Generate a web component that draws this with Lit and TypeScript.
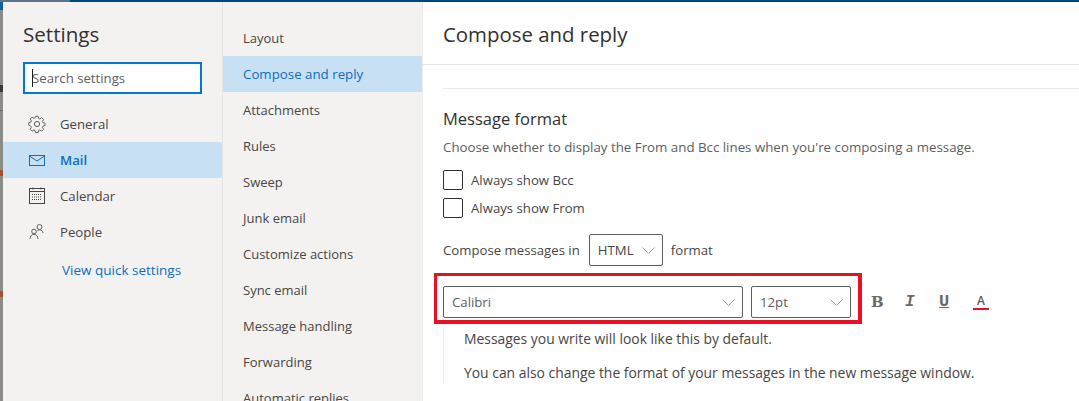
import { LitElement, html, css, svg } from "lit";
import { customElement } from "lit/decorators.js";

const chevron = html`<svg class="chev" width="13" height="7" viewBox="0 0 13 7"><path d="M.5.5l6 6 6-6" fill="none" stroke="#a19f9d" stroke-width="1"/></svg>`;

const icons: Record<string, unknown> = {
  General: svg`<g fill="none" stroke="#605e5c" stroke-width="1"><circle cx="9" cy="9" r="2.6"/><path d="M7.600 1h2.800l.4 2.200 1.400.6 1.900-1.300 2 2-1.300 1.900.6 1.400 2.100.4v2.800l-2.100.4-.6 1.400 1.300 1.900-2 2-1.900-1.300-1.400.6-.4 2.100H7.600l-.4-2.100-1.400-.6-1.900 1.300-2-2 1.300-1.900-.6-1.400L.5 10.400V7.600l2.100-.4.6-1.400-1.300-1.900 2-2 1.900 1.300 1.400-.6z" transform="translate(.3 .3) scale(.95)"/></g>`,
  Mail: svg`<g fill="none" stroke="#106ebe" stroke-width="1"><rect x="1.500" y="4.500" width="15" height="10"/><path d="M1.500 5l7.500 5 7.500-5"/></g>`,
  Calendar: svg`<g fill="none" stroke="#484644" stroke-width="1"><rect x="1.500" y="1.500" width="15" height="15"/><path d="M1.500 4.500h15M5 .5v2M13 .5v2"/><path d="M4 7.500h10M4 10h10M4 12.500h10" stroke-dasharray="1 1"/></g>`,
  People: svg`<g fill="none" stroke="#605e5c" stroke-width="1"><circle cx="11.500" cy="4" r="2.500"/><circle cx="6" cy="8.500" r="2.300"/><path d="M2 16c0-2.800 1.800-4.700 4-4.700s4 1.900 4 4.700M9.500 7.800c.6-.6 1.200-1 2-1 2 0 3.300 1.400 3.500 3.200"/></g>`,
};

const mainNav = ["General", "Mail", "Calendar", "People"];
const subNav = ["Layout", "Compose and reply", "Attachments", "Rules", "Sweep", "Junk email", "Customize actions", "Sync email", "Message handling", "Forwarding", "Automatic replies"];

@customElement("app-root")
export class AppRoot extends LitElement {
  static styles = css`
    :host { display: block; width: 1079px; height: 401px; overflow: hidden; font-family: "Open Sans", "Noto Sans", sans-serif; color: #323130; font-size: 13.2px; background: #fff; }
    .topbar { height: 2px; display: flex; }
    .topbar .a { width: 70px; background: #5e7283; }
    .topbar .b { flex: 1; background: #004578; }
    .frame { display: flex; height: 399px; }
    .dim {
      width: 3px;
      background: linear-gradient(#0f5fa8 0 8px, #8b8b8a 8px 83px, #3a3a3a 83px 90px, #8b8b8a 90px 108px, #707070 108px 109px, #8b8b8a 109px 168px, #a8502e 168px 174px, #8b8b8a 174px 289px, #a8502e 289px 295px, #8b8b8a 295px);
    }
    .panel { width: 219px; background: #f3f2f1; border-right: 1px solid #e6e5e4; flex: none; }
    .title { font-size: 20.6px; line-height: 28px; padding: 18px 0 0 20px; color: #323130; }
    .search { margin: 14px 0 0 20px; width: 179px; height: 32px; box-sizing: border-box; border: 2px solid #0078d4; background: #fff; display: flex; align-items: center; padding-left: 7px; color: #605e5c; position: relative; }
    .search i { position: absolute; left: 7px; top: 5px; width: 1px; height: 18px; background: #201f1e; }
    .nav { margin-top: 12px; }
    .item { height: 36px; display: flex; align-items: center; padding-left: 25px; gap: 14px; border-radius: 2px; color: #484644; }
    .item svg { width: 18px; height: 18px; flex: none; }
    .item.on { background: #c7e0f4; color: #106ebe; font-weight: 600; }
    .link { color: #106ebe; padding: 10px 0 0 59px; line-height: 20px; font-size: 13.5px; }
    .sub { width: 199px; background: #f3f2f1; padding-top: 18px; border-right: 1px solid #edebe9; overflow: hidden; flex: none; font-size: 13px; color: #484644; }
    .sub div { height: 36px; display: flex; align-items: center; padding-left: 20px; white-space: nowrap; }
    .sub .on { background: #c7e0f4; color: #106ebe; font-weight: 500; font-size: 13.3px; }
    .main { flex: 1; min-width: 0; }
    .head { height: 60px; padding: 2px 0 0 20px; border-bottom: 1px solid #e8e6e5; display: flex; align-items: center; font-size: 20.4px; font-weight: 500; }
    .body { padding: 23px 0 0 20px; }
    .rule { height: 1px; background: #edebe9; }
    h3 { margin: 0; font-size: 16.5px; font-weight: 500; line-height: 22px; padding-top: 19px; }
    .desc { color: #605e5c; line-height: 20px; margin-top: 7px; white-space: nowrap; font-size: 13.3px; }
    .check { display: flex; align-items: center; gap: 8px; height: 20px; margin-top: 8px; color: #484644; }
    .check i { width: 20px; height: 20px; box-sizing: border-box; border: 1px solid #323130; border-radius: 2px; background: #fff; }
    .desc + .check { margin-top: 13px; }
    .compose { display: flex; align-items: center; gap: 8px; height: 32px; margin-top: 16px; color: #484644; }
    .compose .select { margin-left: 1px; }
    .select { height: 32px; box-sizing: border-box; border: 1px solid #605e5c; border-radius: 2px; display: flex; align-items: center; justify-content: space-between; padding: 0 7px 0 8px; background: #fff; color: #484644; }
    .fmt { width: 74px; }
    .fontline { display: flex; align-items: center; margin: 7px 0 0 -9px; }
    .fontrow { display: flex; align-items: flex-end; box-sizing: border-box; width: 428px; height: 51px; border: 3px solid #e81123; border-width: 3px 4px 4px 3px; gap: 8px; padding: 0 7px 2px 6px; flex: none; }
    .font { width: 300px; color: #605e5c; }
    .size { width: 100px; color: #605e5c; }
    .tools { display: flex; margin: 7px 0 0 9px; align-items: center; height: 20px; color: #6b6967; }
    .tools span { width: 34px; text-align: left; }
    .tools .b { font: bold 15px/18px "DejaVu Serif", serif; }
    .tools .i { font: italic 16px/18px "Liberation Mono", monospace; font-weight: 700; }
    .tools .u { font: bold 17px/18px "Liberation Mono", monospace; text-decoration: underline; }
    .tools .c { font: 600 12px/14px "Open Sans", sans-serif; color: #605e5c; border-bottom: 2px solid #e81123; width: 16px; height: 14px; text-align: center; }
    .preview { border-left: 1px solid #edebe9; margin-top: 4px; height: 56px; padding-left: 20px; line-height: 20px; white-space: nowrap; color: #484644; font-size: 13.9px; }
    .preview p { margin: 0 0 14px; }
    .preview p:first-child { padding-top: 1px; }
  `;

  render() {
    return html`
      <div class="topbar"><div class="a"></div><div class="b"></div></div>
      <div class="frame">
        <div class="dim"></div>
        <div class="panel">
          <div class="title">Settings</div>
          <div class="search"><i></i>Search settings</div>
          <div class="nav">
            ${mainNav.map((n) => html`<div class="item ${n === "Mail" ? "on" : ""}"><svg viewBox="0 0 18 18">${icons[n]}</svg><span>${n}</span></div>`)}
          </div>
          <div class="link">View quick settings</div>
        </div>
        <div class="sub">
          ${subNav.map((n) => html`<div class="${n === "Compose and reply" ? "on" : ""}">${n}</div>`)}
        </div>
        <div class="main">
          <div class="head">Compose and reply</div>
          <div class="body">
            <div class="rule"></div>
            <h3>Message format</h3>
            <div class="desc">Choose whether to display the From and Bcc lines when you're composing a message.</div>
            <div class="check"><i></i>Always show Bcc</div>
            <div class="check"><i></i>Always show From</div>
            <div class="compose">Compose messages in <div class="select fmt">HTML ${chevron}</div> format</div>
            <div class="fontline">
              <div class="fontrow">
                <div class="select font">Calibri ${chevron}</div>
                <div class="select size">12pt ${chevron}</div>
              </div>
              <div class="tools"><span class="b">B</span><span class="i">I</span><span class="u">U</span><span class="c">A</span></div>
            </div>
            <div class="preview">
              <p>Messages you write will look like this by default.</p>
              <p>You can also change the format of your messages in the new message window.</p>
            </div>
          </div>
        </div>
      </div>
    `;
  }
}
